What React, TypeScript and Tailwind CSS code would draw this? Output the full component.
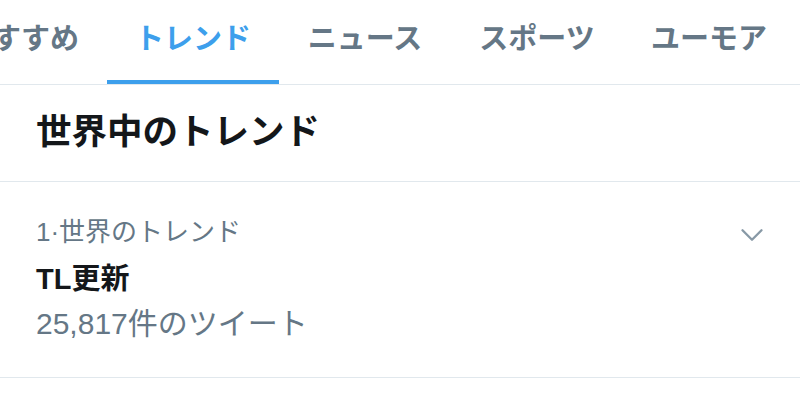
import { ChevronDown } from 'lucide-react';

const tabs = ['おすすめ', 'トレンド', 'ニュース', 'スポーツ', 'ユーモア'];
const activeTab = 'トレンド';

export default function App() {
  return (
    <div
      className="w-[800px] h-[404px] overflow-hidden bg-white text-[#14171a]"
      style={{ fontFamily: '"Liberation Sans", "Noto Sans CJK JP", sans-serif' }}
    >
      {/* Tabs */}
      <div className="border-b border-[#e1e8ed] overflow-hidden">
        <div className="flex -ml-[65px] h-[84px]">
          {tabs.map((t) => (
            <div
              key={t}
              className={`relative shrink-0 w-[172px] flex items-center justify-center text-[29px] font-bold ${
                t === activeTab ? 'text-[#3d9fec]' : 'text-[#657786]'
              }`}
            >
              <span className="-mt-[5px]">{t}</span>
              {t === activeTab && (
                <div className="absolute left-0 right-0 bottom-0 h-[4px] bg-[#3d9fec]" />
              )}
            </div>
          ))}
        </div>
      </div>

      {/* Heading */}
      <div className="h-[97px] flex items-center px-[36px] border-b border-[#e1e8ed]">
        <h2 className="text-[35.5px] font-bold leading-none">世界中のトレンド</h2>
      </div>

      {/* Trend item */}
      <div className="relative h-[196px] px-[36px] pt-[34px] border-b border-[#e1e8ed]">
        <div className="text-[26px] leading-[32px] text-[#657786]">1·世界のトレンド</div>
        <div className="text-[29px] leading-[48px] font-bold mt-[7px]">TL更新</div>
        <div className="text-[30px] leading-[42px] text-[#657786]">25,817件のツイート</div>
        <ChevronDown
          className="absolute right-[29px] top-[34px] text-[#8899a6]"
          size={38}
          strokeWidth={1.5}
        />
      </div>
    </div>
  );
}
